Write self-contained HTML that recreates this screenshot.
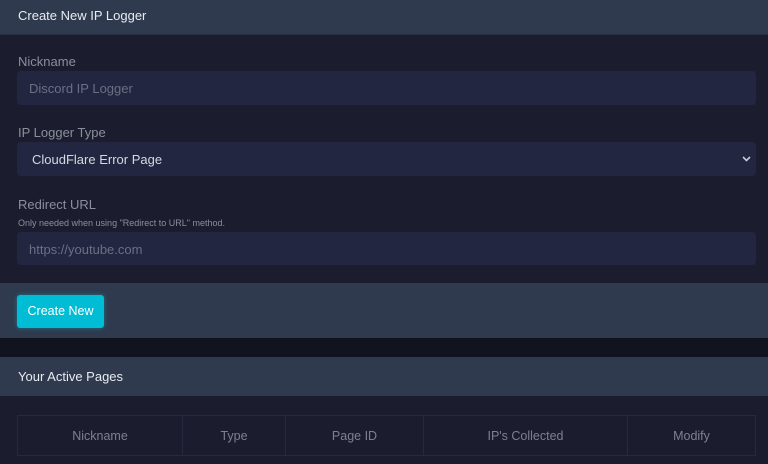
<!DOCTYPE html>
<html><head><style>
*{box-sizing:border-box;margin:0;padding:0}
body{width:768px;height:464px;overflow:hidden;background:#11131f;font-family:"Liberation Sans",sans-serif;position:relative}
.abs{position:absolute}
.hdr{background:#2f3a4e;color:#e8ebf0;font-size:13px}
.bd{background:#1b1d2f}
.lbl{color:#8a8f9c;font-size:13px}
.inp{background:#222640;border-radius:4px;left:17px;width:739px;height:34px}
.inp span{position:absolute;left:12px;top:10px;font-size:13px}
</style></head><body>
<div class="abs hdr" style="left:0;top:0;width:768px;height:35px;border-bottom:1px solid #262e40"><span class="abs" style="left:18px;top:8px">Create New IP Logger</span></div>
<div class="abs bd" style="left:0;top:35px;width:768px;height:248px"></div>
<div class="abs lbl" style="left:18px;top:54px">Nickname</div>
<div class="abs inp" style="top:71px"><span style="color:#6b7082">Discord IP Logger</span></div>
<div class="abs lbl" style="left:18px;top:125px">IP Logger Type</div>
<div class="abs inp" style="top:142px"><span style="color:#d6d9e0;left:15px">CloudFlare Error Page</span>
<svg class="abs" style="right:5px;top:13px" width="9" height="8" viewBox="0 0 9 8"><path d="M1 2l3.5 3.5L8 2" stroke="#c8cbd3" stroke-width="1.6" fill="none"/></svg></div>
<div class="abs lbl" style="left:18px;top:197px">Redirect URL</div>
<div class="abs" style="left:18px;top:218px;font-size:9px;color:#8a8f9c">Only needed when using "Redirect to URL" method.</div>
<div class="abs inp" style="top:232px;height:33px"><span style="color:#6b7082">https://youtube.com</span></div>
<div class="abs" style="left:0;top:283px;width:768px;height:55px;background:#2f3a4e"></div>
<div class="abs" style="left:17px;top:295px;width:87px;height:33px;background:#00bcd4;border-radius:3px;box-shadow:0 0 5px rgba(0,188,212,.5);color:#fff;font-size:12.5px;text-align:center;line-height:33px">Create New</div>
<div class="abs hdr" style="left:0;top:357px;width:768px;height:39px"><span class="abs" style="left:18px;top:12px">Your Active Pages</span></div>
<div class="abs bd" style="left:0;top:396px;width:768px;height:68px"></div>
<table class="abs" style="left:17px;top:415px;width:739px;height:41px;border-collapse:collapse;color:#7c8190;font-size:12.5px;text-align:center">
<tr><td style="width:165px;border:1px solid #262a40">Nickname</td><td style="width:103px;border:1px solid #262a40">Type</td><td style="width:138px;border:1px solid #262a40">Page ID</td><td style="width:204px;border:1px solid #262a40">IP's Collected</td><td style="border:1px solid #262a40">Modify</td></tr></table>
</body></html>
